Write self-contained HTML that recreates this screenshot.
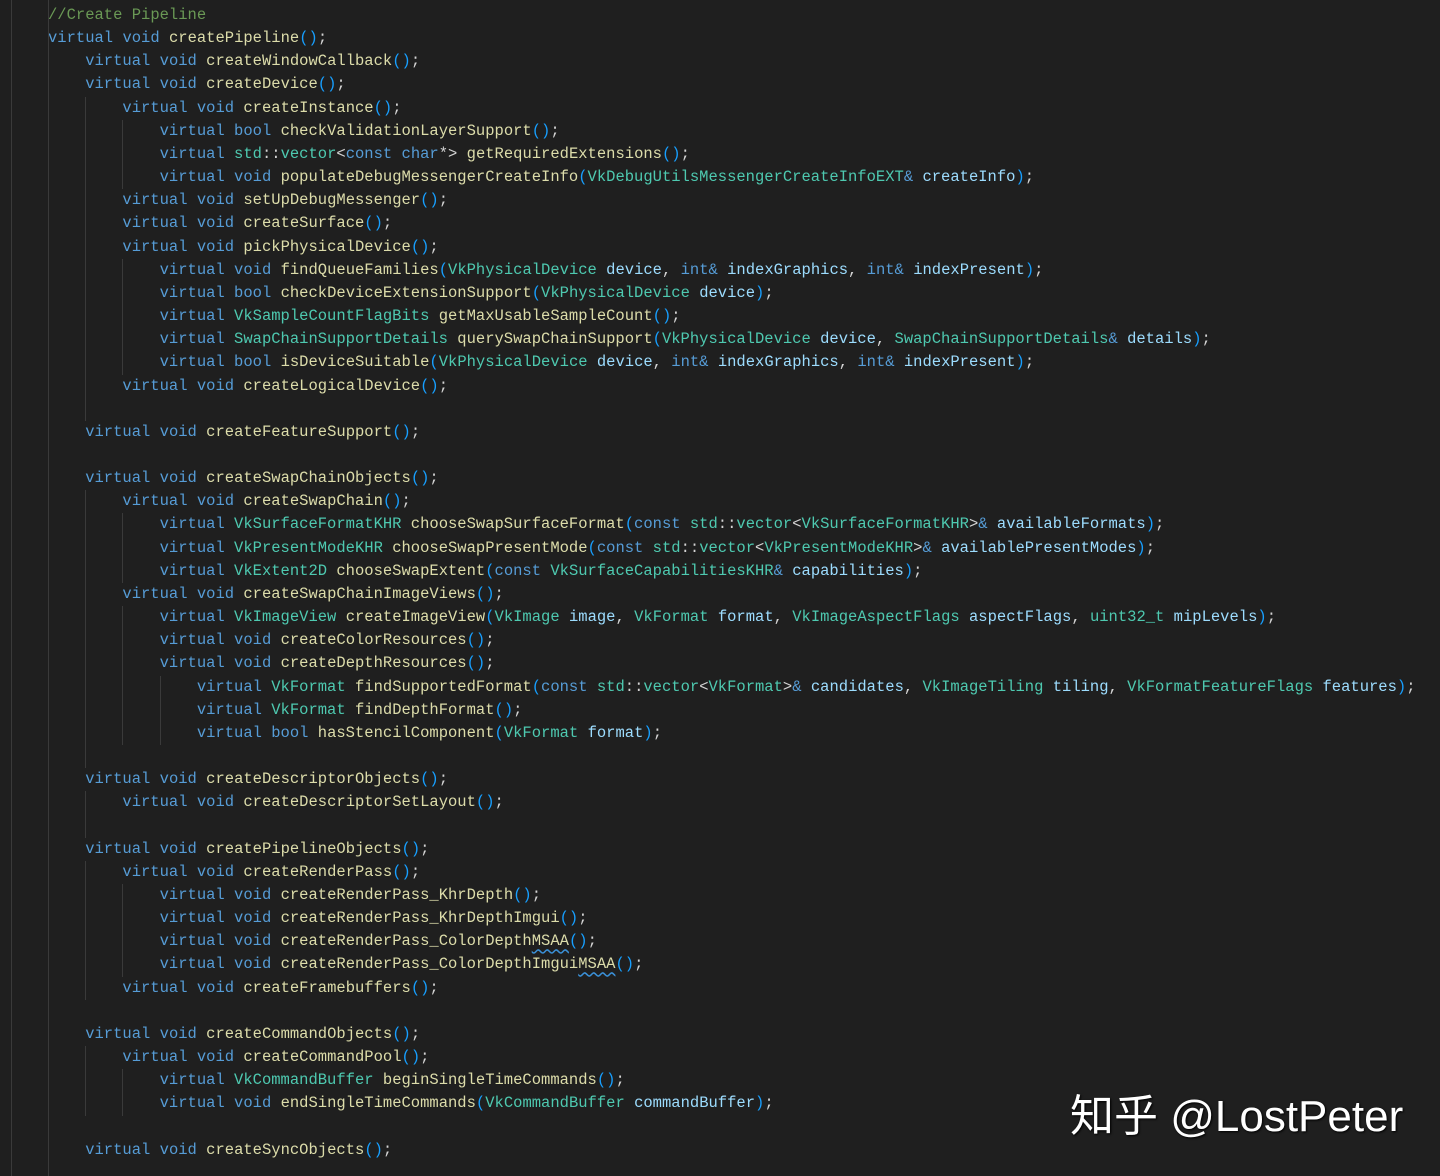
<!DOCTYPE html>
<html><head><meta charset="utf-8"><style>
html,body{margin:0;padding:0;background:#1f1f1f;width:1440px;height:1176px;overflow:hidden;position:relative}
pre{margin:0;padding:4px 0 0 48px;font-family:"Liberation Mono",monospace;font-size:15.5px;line-height:23.16px;color:#d4d4d4;white-space:pre}
.l{display:block;height:23.16px}
i{display:inline-block;width:4ch;height:23.16px;vertical-align:top;border-left:1px solid #3a3a3a;box-sizing:border-box;font-style:normal}
.k{color:#569cd6}.f{color:#dcdcaa}.t{color:#4ec9b0}.p{color:#9cdcfe}.b{color:#179fff}.c{color:#6a9955}
.w{text-decoration:underline wavy #3a8fd6;text-underline-offset:3px}
.g{position:absolute;top:0;height:1176px;width:1px;background:#3a3a3a}
.wm{position:absolute;left:1070px;top:1080px;font-family:"Liberation Sans","Noto Sans CJK SC",sans-serif;font-size:44px;color:#fff;text-shadow:1px 1px 2px #000}
</style></head><body>
<div class="g" style="left:11px"></div><div class="g" style="left:48px"></div>
<pre><span class="l"><span class="c">//Create Pipeline</span></span><span class="l"><span class="k">virtual</span> <span class="k">void</span> <span class="f">createPipeline</span><span class="b">()</span>;</span><span class="l"><i></i><span class="k">virtual</span> <span class="k">void</span> <span class="f">createWindowCallback</span><span class="b">()</span>;</span><span class="l"><i></i><span class="k">virtual</span> <span class="k">void</span> <span class="f">createDevice</span><span class="b">()</span>;</span><span class="l"><i></i><i></i><span class="k">virtual</span> <span class="k">void</span> <span class="f">createInstance</span><span class="b">()</span>;</span><span class="l"><i></i><i></i><i></i><span class="k">virtual</span> <span class="k">bool</span> <span class="f">checkValidationLayerSupport</span><span class="b">()</span>;</span><span class="l"><i></i><i></i><i></i><span class="k">virtual</span> <span class="t">std</span>::<span class="t">vector</span>&lt;<span class="k">const</span> <span class="k">char</span>*&gt; <span class="f">getRequiredExtensions</span><span class="b">()</span>;</span><span class="l"><i></i><i></i><i></i><span class="k">virtual</span> <span class="k">void</span> <span class="f">populateDebugMessengerCreateInfo</span><span class="b">(</span><span class="t">VkDebugUtilsMessengerCreateInfoEXT</span><span class="k">&amp;</span> <span class="p">createInfo</span><span class="b">)</span>;</span><span class="l"><i></i><i></i><span class="k">virtual</span> <span class="k">void</span> <span class="f">setUpDebugMessenger</span><span class="b">()</span>;</span><span class="l"><i></i><i></i><span class="k">virtual</span> <span class="k">void</span> <span class="f">createSurface</span><span class="b">()</span>;</span><span class="l"><i></i><i></i><span class="k">virtual</span> <span class="k">void</span> <span class="f">pickPhysicalDevice</span><span class="b">()</span>;</span><span class="l"><i></i><i></i><i></i><span class="k">virtual</span> <span class="k">void</span> <span class="f">findQueueFamilies</span><span class="b">(</span><span class="t">VkPhysicalDevice</span> <span class="p">device</span>, <span class="k">int&amp;</span> <span class="p">indexGraphics</span>, <span class="k">int&amp;</span> <span class="p">indexPresent</span><span class="b">)</span>;</span><span class="l"><i></i><i></i><i></i><span class="k">virtual</span> <span class="k">bool</span> <span class="f">checkDeviceExtensionSupport</span><span class="b">(</span><span class="t">VkPhysicalDevice</span> <span class="p">device</span><span class="b">)</span>;</span><span class="l"><i></i><i></i><i></i><span class="k">virtual</span> <span class="t">VkSampleCountFlagBits</span> <span class="f">getMaxUsableSampleCount</span><span class="b">()</span>;</span><span class="l"><i></i><i></i><i></i><span class="k">virtual</span> <span class="t">SwapChainSupportDetails</span> <span class="f">querySwapChainSupport</span><span class="b">(</span><span class="t">VkPhysicalDevice</span> <span class="p">device</span>, <span class="t">SwapChainSupportDetails</span><span class="k">&amp;</span> <span class="p">details</span><span class="b">)</span>;</span><span class="l"><i></i><i></i><i></i><span class="k">virtual</span> <span class="k">bool</span> <span class="f">isDeviceSuitable</span><span class="b">(</span><span class="t">VkPhysicalDevice</span> <span class="p">device</span>, <span class="k">int&amp;</span> <span class="p">indexGraphics</span>, <span class="k">int&amp;</span> <span class="p">indexPresent</span><span class="b">)</span>;</span><span class="l"><i></i><i></i><span class="k">virtual</span> <span class="k">void</span> <span class="f">createLogicalDevice</span><span class="b">()</span>;</span><span class="l"><i></i><i></i></span><span class="l"><i></i><span class="k">virtual</span> <span class="k">void</span> <span class="f">createFeatureSupport</span><span class="b">()</span>;</span><span class="l"><i></i></span><span class="l"><i></i><span class="k">virtual</span> <span class="k">void</span> <span class="f">createSwapChainObjects</span><span class="b">()</span>;</span><span class="l"><i></i><i></i><span class="k">virtual</span> <span class="k">void</span> <span class="f">createSwapChain</span><span class="b">()</span>;</span><span class="l"><i></i><i></i><i></i><span class="k">virtual</span> <span class="t">VkSurfaceFormatKHR</span> <span class="f">chooseSwapSurfaceFormat</span><span class="b">(</span><span class="k">const</span> <span class="t">std</span>::<span class="t">vector</span>&lt;<span class="t">VkSurfaceFormatKHR</span>&gt;<span class="k">&amp;</span> <span class="p">availableFormats</span><span class="b">)</span>;</span><span class="l"><i></i><i></i><i></i><span class="k">virtual</span> <span class="t">VkPresentModeKHR</span> <span class="f">chooseSwapPresentMode</span><span class="b">(</span><span class="k">const</span> <span class="t">std</span>::<span class="t">vector</span>&lt;<span class="t">VkPresentModeKHR</span>&gt;<span class="k">&amp;</span> <span class="p">availablePresentModes</span><span class="b">)</span>;</span><span class="l"><i></i><i></i><i></i><span class="k">virtual</span> <span class="t">VkExtent2D</span> <span class="f">chooseSwapExtent</span><span class="b">(</span><span class="k">const</span> <span class="t">VkSurfaceCapabilitiesKHR</span><span class="k">&amp;</span> <span class="p">capabilities</span><span class="b">)</span>;</span><span class="l"><i></i><i></i><span class="k">virtual</span> <span class="k">void</span> <span class="f">createSwapChainImageViews</span><span class="b">()</span>;</span><span class="l"><i></i><i></i><i></i><span class="k">virtual</span> <span class="t">VkImageView</span> <span class="f">createImageView</span><span class="b">(</span><span class="t">VkImage</span> <span class="p">image</span>, <span class="t">VkFormat</span> <span class="p">format</span>, <span class="t">VkImageAspectFlags</span> <span class="p">aspectFlags</span>, <span class="t">uint32_t</span> <span class="p">mipLevels</span><span class="b">)</span>;</span><span class="l"><i></i><i></i><i></i><span class="k">virtual</span> <span class="k">void</span> <span class="f">createColorResources</span><span class="b">()</span>;</span><span class="l"><i></i><i></i><i></i><span class="k">virtual</span> <span class="k">void</span> <span class="f">createDepthResources</span><span class="b">()</span>;</span><span class="l"><i></i><i></i><i></i><i></i><span class="k">virtual</span> <span class="t">VkFormat</span> <span class="f">findSupportedFormat</span><span class="b">(</span><span class="k">const</span> <span class="t">std</span>::<span class="t">vector</span>&lt;<span class="t">VkFormat</span>&gt;<span class="k">&amp;</span> <span class="p">candidates</span>, <span class="t">VkImageTiling</span> <span class="p">tiling</span>, <span class="t">VkFormatFeatureFlags</span> <span class="p">features</span><span class="b">)</span>;</span><span class="l"><i></i><i></i><i></i><i></i><span class="k">virtual</span> <span class="t">VkFormat</span> <span class="f">findDepthFormat</span><span class="b">()</span>;</span><span class="l"><i></i><i></i><i></i><i></i><span class="k">virtual</span> <span class="k">bool</span> <span class="f">hasStencilComponent</span><span class="b">(</span><span class="t">VkFormat</span> <span class="p">format</span><span class="b">)</span>;</span><span class="l"><i></i><i></i></span><span class="l"><i></i><span class="k">virtual</span> <span class="k">void</span> <span class="f">createDescriptorObjects</span><span class="b">()</span>;</span><span class="l"><i></i><i></i><span class="k">virtual</span> <span class="k">void</span> <span class="f">createDescriptorSetLayout</span><span class="b">()</span>;</span><span class="l"><i></i><i></i></span><span class="l"><i></i><span class="k">virtual</span> <span class="k">void</span> <span class="f">createPipelineObjects</span><span class="b">()</span>;</span><span class="l"><i></i><i></i><span class="k">virtual</span> <span class="k">void</span> <span class="f">createRenderPass</span><span class="b">()</span>;</span><span class="l"><i></i><i></i><i></i><span class="k">virtual</span> <span class="k">void</span> <span class="f">createRenderPass_KhrDepth</span><span class="b">()</span>;</span><span class="l"><i></i><i></i><i></i><span class="k">virtual</span> <span class="k">void</span> <span class="f">createRenderPass_KhrDepthImgui</span><span class="b">()</span>;</span><span class="l"><i></i><i></i><i></i><span class="k">virtual</span> <span class="k">void</span> <span class="f">createRenderPass_ColorDepth<span class="w">MSAA</span></span><span class="b">()</span>;</span><span class="l"><i></i><i></i><i></i><span class="k">virtual</span> <span class="k">void</span> <span class="f">createRenderPass_ColorDepthImgui<span class="w">MSAA</span></span><span class="b">()</span>;</span><span class="l"><i></i><i></i><span class="k">virtual</span> <span class="k">void</span> <span class="f">createFramebuffers</span><span class="b">()</span>;</span><span class="l"><i></i></span><span class="l"><i></i><span class="k">virtual</span> <span class="k">void</span> <span class="f">createCommandObjects</span><span class="b">()</span>;</span><span class="l"><i></i><i></i><span class="k">virtual</span> <span class="k">void</span> <span class="f">createCommandPool</span><span class="b">()</span>;</span><span class="l"><i></i><i></i><i></i><span class="k">virtual</span> <span class="t">VkCommandBuffer</span> <span class="f">beginSingleTimeCommands</span><span class="b">()</span>;</span><span class="l"><i></i><i></i><i></i><span class="k">virtual</span> <span class="k">void</span> <span class="f">endSingleTimeCommands</span><span class="b">(</span><span class="t">VkCommandBuffer</span> <span class="p">commandBuffer</span><span class="b">)</span>;</span><span class="l"><i></i></span><span class="l"><i></i><span class="k">virtual</span> <span class="k">void</span> <span class="f">createSyncObjects</span><span class="b">()</span>;</span></pre>
<div class="wm">知乎 @LostPeter</div>
</body></html>
